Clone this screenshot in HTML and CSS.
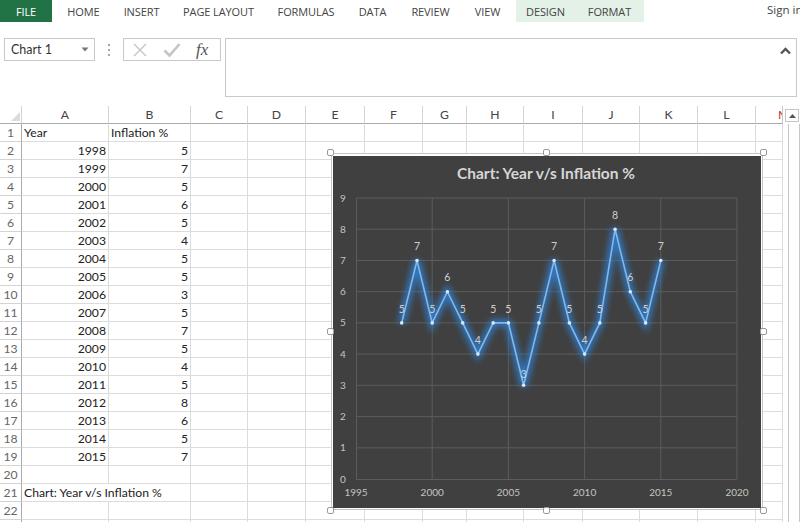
FILE: index.html
```html
<!DOCTYPE html>
<html>
<head>
<meta charset="utf-8">
<link rel="stylesheet" href="styles.css">
</head>
<body>
<div class="app">
  <nav class="ribbon">
    <span class="tab file">FILE</span>
    <span class="tab t-home">HOME</span>
    <span class="tab t-insert">INSERT</span>
    <span class="tab t-page">PAGE LAYOUT</span>
    <span class="tab t-form">FORMULAS</span>
    <span class="tab t-data">DATA</span>
    <span class="tab t-review">REVIEW</span>
    <span class="tab t-view">VIEW</span>
    <span class="ctx">
      <span class="tab t-design">DESIGN</span>
      <span class="tab t-format">FORMAT</span>
    </span>
    <span class="signin">Sign in</span>
  </nav>

  <div class="fbar">
    <div class="namebox">
      <span>Chart 1</span>
      <svg class="nb-arrow" width="8" height="5" viewBox="0 0 8 5"><path d="M0.5 0.5 L7.5 0.5 L4 4.5 Z"/></svg>
    </div>
    <div class="dots"><i></i><i></i><i></i></div>
    <div class="fxbox">
      <svg class="ico" width="16" height="16" viewBox="0 0 16 16"><path d="M2 2 L14 14 M14 2 L2 14"/></svg>
      <svg class="ico chk" width="18" height="16" viewBox="0 0 18 16"><path d="M1.5 8.5 L6.5 13.5 L16.5 2"/></svg>
      <span class="fx">fx</span>
    </div>
    <div class="finput">
      <svg class="caret" width="11" height="8" viewBox="0 0 11 8"><path d="M1 6.5 L5.5 2 L10 6.5"/></svg>
    </div>
  </div>

  <div class="sheet-wrap">
    <div class="sheet">
      <div class="row head">
        <span class="corner"><svg width="22" height="18" viewBox="0 0 22 18"><path d="M20 6 L20 15 L11 15 Z"/></svg></span>
        <span>A</span><span>B</span><span>C</span><span>D</span><span>E</span><span>F</span><span>G</span><span>H</span><span>I</span><span>J</span><span>K</span><span>L</span><span class="m">M</span>
      </div>
      <div class="row"><span class="rh">1</span><span>Year</span><span>Inflation %</span><i></i><i></i><i></i><i></i><i></i><i></i><i></i><i></i><i></i><i></i><i></i></div>
      <div class="row"><span class="rh">2</span><span class="n">1998</span><span class="n">5</span><i></i><i></i><i></i><i></i><i></i><i></i><i></i><i></i><i></i><i></i><i></i></div>
      <div class="row"><span class="rh">3</span><span class="n">1999</span><span class="n">7</span><i></i><i></i><i></i><i></i><i></i><i></i><i></i><i></i><i></i><i></i><i></i></div>
      <div class="row"><span class="rh">4</span><span class="n">2000</span><span class="n">5</span><i></i><i></i><i></i><i></i><i></i><i></i><i></i><i></i><i></i><i></i><i></i></div>
      <div class="row"><span class="rh">5</span><span class="n">2001</span><span class="n">6</span><i></i><i></i><i></i><i></i><i></i><i></i><i></i><i></i><i></i><i></i><i></i></div>
      <div class="row"><span class="rh">6</span><span class="n">2002</span><span class="n">5</span><i></i><i></i><i></i><i></i><i></i><i></i><i></i><i></i><i></i><i></i><i></i></div>
      <div class="row"><span class="rh">7</span><span class="n">2003</span><span class="n">4</span><i></i><i></i><i></i><i></i><i></i><i></i><i></i><i></i><i></i><i></i><i></i></div>
      <div class="row"><span class="rh">8</span><span class="n">2004</span><span class="n">5</span><i></i><i></i><i></i><i></i><i></i><i></i><i></i><i></i><i></i><i></i><i></i></div>
      <div class="row"><span class="rh">9</span><span class="n">2005</span><span class="n">5</span><i></i><i></i><i></i><i></i><i></i><i></i><i></i><i></i><i></i><i></i><i></i></div>
      <div class="row"><span class="rh">10</span><span class="n">2006</span><span class="n">3</span><i></i><i></i><i></i><i></i><i></i><i></i><i></i><i></i><i></i><i></i><i></i></div>
      <div class="row"><span class="rh">11</span><span class="n">2007</span><span class="n">5</span><i></i><i></i><i></i><i></i><i></i><i></i><i></i><i></i><i></i><i></i><i></i></div>
      <div class="row"><span class="rh">12</span><span class="n">2008</span><span class="n">7</span><i></i><i></i><i></i><i></i><i></i><i></i><i></i><i></i><i></i><i></i><i></i></div>
      <div class="row"><span class="rh">13</span><span class="n">2009</span><span class="n">5</span><i></i><i></i><i></i><i></i><i></i><i></i><i></i><i></i><i></i><i></i><i></i></div>
      <div class="row"><span class="rh">14</span><span class="n">2010</span><span class="n">4</span><i></i><i></i><i></i><i></i><i></i><i></i><i></i><i></i><i></i><i></i><i></i></div>
      <div class="row"><span class="rh">15</span><span class="n">2011</span><span class="n">5</span><i></i><i></i><i></i><i></i><i></i><i></i><i></i><i></i><i></i><i></i><i></i></div>
      <div class="row"><span class="rh">16</span><span class="n">2012</span><span class="n">8</span><i></i><i></i><i></i><i></i><i></i><i></i><i></i><i></i><i></i><i></i><i></i></div>
      <div class="row"><span class="rh">17</span><span class="n">2013</span><span class="n">6</span><i></i><i></i><i></i><i></i><i></i><i></i><i></i><i></i><i></i><i></i><i></i></div>
      <div class="row"><span class="rh">18</span><span class="n">2014</span><span class="n">5</span><i></i><i></i><i></i><i></i><i></i><i></i><i></i><i></i><i></i><i></i><i></i></div>
      <div class="row"><span class="rh">19</span><span class="n">2015</span><span class="n">7</span><i></i><i></i><i></i><i></i><i></i><i></i><i></i><i></i><i></i><i></i><i></i></div>
      <div class="row"><span class="rh">20</span><span></span><span></span><i></i><i></i><i></i><i></i><i></i><i></i><i></i><i></i><i></i><i></i><i></i></div>
      <div class="row"><span class="rh">21</span><span class="span2">Chart: Year v/s Inflation %</span><i></i><i></i><i></i><i></i><i></i><i></i><i></i><i></i><i></i><i></i><i></i></div>
      <div class="row"><span class="rh">22</span><span></span><span></span><i></i><i></i><i></i><i></i><i></i><i></i><i></i><i></i><i></i><i></i><i></i></div>
      <div class="row"><span class="rh">23</span><span></span><span></span><i></i><i></i><i></i><i></i><i></i><i></i><i></i><i></i><i></i><i></i><i></i></div>
    </div>

    <div class="vscroll">
      <div class="vs-up"><svg width="7" height="4" viewBox="0 0 7 4"><path d="M0 4 L3.5 0 L7 4 Z"/></svg></div>
      <div class="vs-track"></div>
    </div>

    <div class="chart">
      <span class="hd tl"></span><span class="hd tm"></span><span class="hd tr"></span>
      <span class="hd ml"></span><span class="hd mr"></span>
      <span class="hd bl"></span><span class="hd bm"></span><span class="hd br"></span>
      <svg class="plot" width="428" height="352" viewBox="0 0 428 352">
        <defs>
          <filter id="glow" x="-20%" y="-20%" width="140%" height="140%">
            <feGaussianBlur stdDeviation="3"/>
          </filter>
        </defs>
        <text class="title" x="213" y="23">Chart: Year v/s Inflation %</text>
        <g class="grid">
          <path d="M23 323.5H404 M23 291.8H404 M23 260.6H404 M23 229.3H404 M23 198.1H404 M23 166.9H404 M23 135.7H404 M23 104.5H404 M23 73.2H404 M23 42H404"/>
          <path d="M23.5 42V323 M99.2 42V323 M175.4 42V323 M251.6 42V323 M327.8 42V323 M404 42V323"/>
        </g>
        <g class="ylab">
          <text x="10" y="327">0</text><text x="10" y="295.3">1</text><text x="10" y="264.1">2</text><text x="10" y="232.8">3</text><text x="10" y="201.6">4</text><text x="10" y="170.4">5</text><text x="10" y="139.2">6</text><text x="10" y="108">7</text><text x="10" y="76.7">8</text><text x="10" y="45.5">9</text>
        </g>
        <g class="xlab">
          <text x="23" y="340">1995</text><text x="99.2" y="340">2000</text><text x="175.4" y="340">2005</text><text x="251.6" y="340">2010</text><text x="327.8" y="340">2015</text><text x="404" y="340">2020</text>
        </g>
        <polyline class="glowline" points="68.7,166.9 84,104.5 99.2,166.9 114.4,135.7 129.7,166.9 144.9,198.1 160.2,166.9 175.4,166.9 190.6,229.3 205.9,166.9 221.1,104.5 236.4,166.9 251.6,198.1 266.8,166.9 282.1,73.2 297.3,135.7 312.6,166.9 327.8,104.5"/>
        <polyline class="line" points="68.7,166.9 84,104.5 99.2,166.9 114.4,135.7 129.7,166.9 144.9,198.1 160.2,166.9 175.4,166.9 190.6,229.3 205.9,166.9 221.1,104.5 236.4,166.9 251.6,198.1 266.8,166.9 282.1,73.2 297.3,135.7 312.6,166.9 327.8,104.5"/>
        <g class="pts">
          <circle cx="68.7" cy="166.9" r="1.8"/><circle cx="84" cy="104.5" r="1.8"/><circle cx="99.2" cy="166.9" r="1.8"/><circle cx="114.4" cy="135.7" r="1.8"/><circle cx="129.7" cy="166.9" r="1.8"/><circle cx="144.9" cy="198.1" r="1.8"/><circle cx="160.2" cy="166.9" r="1.8"/><circle cx="175.4" cy="166.9" r="1.8"/><circle cx="190.6" cy="229.3" r="1.8"/><circle cx="205.9" cy="166.9" r="1.8"/><circle cx="221.1" cy="104.5" r="1.8"/><circle cx="236.4" cy="166.9" r="1.8"/><circle cx="251.6" cy="198.1" r="1.8"/><circle cx="266.8" cy="166.9" r="1.8"/><circle cx="282.1" cy="73.2" r="1.8"/><circle cx="297.3" cy="135.7" r="1.8"/><circle cx="312.6" cy="166.9" r="1.8"/><circle cx="327.8" cy="104.5" r="1.8"/>
        </g>
        <g class="dlab">
          <text x="68.7" y="156.5">5</text><text x="84" y="94">7</text><text x="99.2" y="156.5">5</text><text x="114.4" y="125.3">6</text><text x="129.7" y="156.5">5</text><text x="144.9" y="187.7">4</text><text x="160.2" y="156.5">5</text><text x="175.4" y="156.5">5</text><text x="190.6" y="222">3</text><text x="205.9" y="156.5">5</text><text x="221.1" y="94">7</text><text x="236.4" y="156.5">5</text><text x="251.6" y="187.7">4</text><text x="266.8" y="156.5">5</text><text x="282.1" y="62.8">8</text><text x="297.3" y="125.3">6</text><text x="312.6" y="156.5">5</text><text x="327.8" y="94">7</text>
        </g>
      </svg>
    </div>
  </div>
</div>
</body>
</html>
```
FILE: styles.css
```css
* { box-sizing: border-box; }
html, body { margin: 0; padding: 0; background: #fff; }
body { width: 800px; height: 522px; overflow: hidden; font-family: "Open Sans", "Noto Sans", sans-serif; color: #444; }

.app { width: 800px; height: 522px; position: relative; overflow: hidden; }

/* ribbon tabs */
.ribbon { display: flex; align-items: stretch; height: 22px; font-size: 11px; }
.tab { display: flex; align-items: center; justify-content: center; height: 22px; color: #444; letter-spacing: -0.1px; }
.file { width: 52px; background: #217346; color: #fff; }
.t-home { width: 63px; }
.t-insert { width: 53px; }
.t-page { width: 101px; }
.t-form { width: 74px; }
.t-data { width: 59px; }
.t-review { width: 57px; }
.t-view { width: 57px; }
.ctx { display: flex; background: #e3f1e6; }
.t-design { width: 59px; }
.t-format { width: 69px; }
.signin { margin-left: auto; display: flex; align-items: center; font-size: 11.5px; color: #444; width: 33px; white-space: nowrap; overflow: hidden; padding-bottom: 4px; }

/* formula bar */
.fbar { display: flex; align-items: flex-start; margin-top: 16px; height: 59px; }
.namebox { margin-left: 4px; width: 91px; height: 23px; border: 1px solid #c9c9c9; display: flex; align-items: center; justify-content: space-between; padding: 0 5px 0 6px; font-family: "Lato", sans-serif; font-size: 12.5px; color: #333; }
.nb-arrow path { fill: #777; }
.dots { width: 28px; height: 23px; display: flex; flex-direction: column; align-items: center; justify-content: center; gap: 3px; }
.dots i { display: block; width: 2px; height: 2px; background: #a6a6a6; }
.fxbox { width: 98px; height: 23px; border: 1px solid #c9c9c9; display: flex; align-items: center; padding-left: 8px; }
.ico path { fill: none; stroke: #c4c4c4; stroke-width: 1.4; }
.chk { margin-left: 15px; }
.chk path { stroke-width: 2.6; stroke-linejoin: miter; }
.fx { margin-left: 15px; font-family: "Liberation Serif", serif; font-style: italic; font-size: 17px; color: #555; line-height: 1; }
.finput { margin-left: 4px; width: 572px; height: 59px; border: 1px solid #c9c9c9; display: flex; justify-content: flex-end; padding: 8px 5px 0 0; }
.caret path { fill: none; stroke: #555; stroke-width: 2.4; }

/* sheet */
.sheet-wrap { position: relative; display: flex; margin-top: 9px; height: 416px; }
.sheet { width: 783px; height: 416px; overflow: hidden; }
.row { display: grid; grid-template-columns: 22px 87px 82px 57px 58px 59px 58px 44px 57px 59px 57px 58px 58px 27px; height: 18px; }
.row > * { display: block; height: 18px; border-right: 1px solid #dadcdd; border-bottom: 1px solid #dadcdd; font-family: "Lato", sans-serif; font-style: normal; font-size: 12.2px; line-height: 17px; color: #222; padding: 0 2px; white-space: nowrap; overflow: hidden; }
.row > .n { text-align: right; }
.row > .span2 { grid-column: span 2; overflow: visible; }
.row > .rh { text-align: center; color: #666; padding: 0; border-right-color: #ababab; border-bottom-color: #d4d4d4; }
.head > * { text-align: center; color: #444; border-bottom-color: #ababab; border-right-color: #d4d4d4; }
.head > .corner { padding: 0; }
.corner path { fill: #dcdcdc; }
.head > .m { text-align: left; padding-left: 22px; color: #c0392b; border-right-color: #c8c8c8; }

.vscroll { width: 17px; height: 416px; display: flex; flex-direction: column; padding-left: 2px; }
.vs-up { margin-top: 3px; width: 14px; height: 13px; border: 1px solid #c6c6c6; display: flex; align-items: center; justify-content: center; }
.vs-up path { fill: #555; }
.vs-track { margin-top: 2px; flex: 1; border-left: 1px solid #c6c6c6; border-right: 1px solid #c6c6c6; margin-left: 3px; }

/* chart overlay */
.chart { position: absolute; left: 331px; top: 47px; width: 432px; height: 357px; border: 1px solid #c4c4c4; padding: 2px 1px 1px 1px; background: #fff; }
.plot { display: block; background: #404040; }
.hd { position: absolute; width: 7px; height: 7px; background: #fff; border: 1px solid #9a9a9a; border-radius: 2px; z-index: 2; }
.tl { left: -5px; top: -5px; }
.tm { left: calc(50% - 4px); top: -5px; }
.tr { right: -5px; top: -5px; }
.ml { left: -5px; top: calc(50% - 4px); }
.mr { right: -5px; top: calc(50% - 4px); }
.bl { left: -5px; bottom: -5px; }
.bm { left: calc(50% - 4px); bottom: -5px; }
.br { right: -5px; bottom: -5px; }

.title { font-family: "Lato", sans-serif; font-weight: bold; font-size: 15.5px; fill: #d6d6d6; text-anchor: middle; }
.grid path { stroke: #5c5c5c; stroke-width: 1; fill: none; }
.ylab text, .xlab text { font-family: "Lato", sans-serif; font-size: 10px; fill: #c4c4c4; text-anchor: middle; }
.glowline { fill: none; stroke: #2f86e0; stroke-width: 7; opacity: 0.8; filter: url(#glow); }
.line { fill: none; stroke: #7fb8ee; stroke-width: 1.6; stroke-linejoin: miter; }
.pts circle { fill: #d4e8fb; }
.dlab text { font-family: "Lato", sans-serif; font-size: 10.5px; fill: #cfcfcf; text-anchor: middle; }
```
